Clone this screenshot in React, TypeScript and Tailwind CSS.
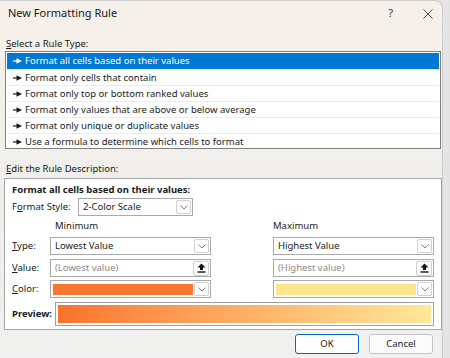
import React from "react";

const F = { fontFamily: '"Noto Sans", "Open Sans", sans-serif' };

function Arrow({ white }: { white?: boolean }) {
  const c = white ? "#ffffff" : "#1a1a1a";
  return (
    <svg width="9" height="6" viewBox="0 0 9 6" className="shrink-0">
      <rect x="0" y="2.4" width="4" height="1.2" fill={c} />
      <polygon points="3.5,0.3 9,3 3.5,5.7" fill={c} />
    </svg>
  );
}

function Chevron() {
  return (
    <div className="w-[15px] h-[14px] border border-[#d0d0d0] rounded-[2px] bg-white flex items-center justify-center shrink-0">
      <svg width="8" height="5" viewBox="0 0 8 5">
        <polyline points="0.5,0.5 4,4 7.5,0.5" fill="none" stroke="#707070" strokeWidth="0.9" />
      </svg>
    </div>
  );
}

function UpBtn() {
  return (
    <div className="w-[16px] h-[15px] border border-[#cfcfcf] rounded-[2px] bg-white flex items-center justify-center shrink-0">
      <svg width="9" height="10" viewBox="0 0 9 10">
        <polygon points="4.5,0.5 8.5,4.5 6,4.5 6,7 3,7 3,4.5 0.5,4.5" fill="#111" />
        <rect x="0.5" y="8.3" width="8" height="1.4" fill="#111" />
      </svg>
    </div>
  );
}

function Combo({ text, w }: { text: string; w: string }) {
  return (
    <div className={`${w} h-[18px] border border-[#a9a9a9] bg-white flex items-center pl-[4px] pr-[1px] justify-between`}>
      <span className="text-[9.5px] text-[#1a1a1a] leading-none">{text}</span>
      <Chevron />
    </div>
  );
}

function ValueBox({ text, w }: { text: string; w: string }) {
  return (
    <div className={`${w} h-[18px] border border-[#a9a9a9] bg-white flex items-center pl-[4px] pr-[1px] justify-between`}>
      <span className="text-[9.5px] text-[#8a8a8a] leading-none">{text}</span>
      <UpBtn />
    </div>
  );
}

function ColorBox({ color, w }: { color: string; w: string }) {
  return (
    <div className={`${w} h-[18px] border border-[#a9a9a9] bg-white flex items-center pl-[2px] pr-[1px] gap-[1px]`}>
      <div className="flex-1 h-[11px]" style={{ background: color }} />
      <Chevron />
    </div>
  );
}

const items = [
  "Format all cells based on their values",
  "Format only cells that contain",
  "Format only top or bottom ranked values",
  "Format only values that are above or below average",
  "Format only unique or duplicate values",
  "Use a formula to determine which cells to format",
];

export default function App() {
  return (
    <div className="w-[450px] h-[358px] bg-[#e4e4e4] overflow-hidden" style={F}>
      <div className="w-[443px] h-[358px] rounded-tr-[8px] border-r border-t border-[#cfcfcf] bg-gradient-to-b from-[#f5f0e9] via-[#f1efec] to-[#f0f0f0] flex flex-col relative">
        <div className="h-[25px] flex items-center pl-[8px] shrink-0">
          <span className="text-[11px] text-[#1a1a1a]">New Formatting Rule</span>
          <span className="ml-auto text-[11px] text-[#333] mr-[30px]">?</span>
          <svg width="10" height="10" viewBox="0 0 10 10" className="mr-[9px]">
            <path d="M0.5 0.5 L9.5 9.5 M9.5 0.5 L0.5 9.5" stroke="#333" strokeWidth="0.9" />
          </svg>
        </div>
        <div className="h-[25px] flex items-end pb-[3px] pl-[6px] shrink-0">
          <span className="text-[9.5px] text-[#1a1a1a] leading-none">
            <span className="underline">S</span>elect a Rule Type:
          </span>
        </div>
        <div className="ml-[5px] w-[436px] h-[98px] border border-[#7f7f7f] bg-white p-[1px] flex flex-col shrink-0">
          {items.map((t, i) => (
            <div
              key={t}
              className={`h-[16px] flex items-center gap-[3px] pl-[6px] shrink-0 ${
                i === 0 ? "bg-[#0078d4] text-white" : "text-[#1a1a1a] border-t border-[#ececec]"
              }`}
            >
              <Arrow white={i === 0} />
              <span className="text-[9.5px] leading-none">{t}</span>
            </div>
          ))}
        </div>
        <div className="h-[29px] flex items-end pb-[5px] pl-[6px] shrink-0">
          <span className="text-[9.5px] text-[#1a1a1a] leading-none">
            <span className="underline">E</span>dit the Rule Description:
          </span>
        </div>
        <div className="ml-[4px] w-[438px] h-[152px] border border-[#a5a5a5] bg-white flex flex-col pl-[7px] shrink-0">
          <div className="h-[15px] flex items-end shrink-0">
            <span className="text-[9.5px] font-bold text-[#1a1a1a] leading-none">
              Format all cells based on their values:
            </span>
          </div>
          <div className="mt-[4px] flex items-center h-[18px] shrink-0">
            <span className="w-[66px] text-[9.5px] text-[#1a1a1a] leading-none">
              F<span className="underline">o</span>rmat Style:
            </span>
            <Combo text="2-Color Scale" w="w-[115px]" />
          </div>
          <div className="h-[14px] flex items-end shrink-0">
            <span className="w-[43px]" />
            <span className="w-[218px] text-[9.5px] text-[#1a1a1a] leading-none">Minimum</span>
            <span className="text-[9.5px] text-[#1a1a1a] leading-none">Maximum</span>
          </div>
          <div className="mt-[7px] flex items-center h-[18px] shrink-0">
            <span className="w-[38px] text-[9.5px] text-[#1a1a1a] leading-none">
              <span className="underline">T</span>ype:
            </span>
            <Combo text="Lowest Value" w="w-[161px]" />
            <span className="w-[62px]" />
            <Combo text="Highest Value" w="w-[161px]" />
          </div>
          <div className="mt-[4px] flex items-center h-[18px] shrink-0">
            <span className="w-[38px] text-[9.5px] text-[#1a1a1a] leading-none">
              <span className="underline">V</span>alue:
            </span>
            <ValueBox text="(Lowest value)" w="w-[161px]" />
            <span className="w-[62px]" />
            <ValueBox text="(Highest value)" w="w-[161px]" />
          </div>
          <div className="mt-[3px] flex items-center h-[18px] shrink-0">
            <span className="w-[38px] text-[9.5px] text-[#1a1a1a] leading-none">
              <span className="underline">C</span>olor:
            </span>
            <ColorBox color="#f8762d" w="w-[161px]" />
            <span className="w-[62px]" />
            <ColorBox color="#fde58e" w="w-[161px]" />
          </div>
          <div className="mt-[4px] flex items-center h-[24px] shrink-0">
            <span className="w-[43px] text-[9.5px] font-bold text-[#1a1a1a] leading-none">Preview:</span>
            <div className="w-[379px] h-[24px] border border-[#a0a0a0] p-[2px]">
              <div className="w-full h-full bg-gradient-to-r from-[#f8732b] to-[#fde899]" />
            </div>
          </div>
        </div>
        <div className="mt-[4px] flex pl-[295px] gap-[10px] shrink-0">
          <div className="w-[64px] h-[20px] bg-white border border-[#0067c0] rounded-[3px] flex items-center justify-center text-[9.5px] text-[#1a1a1a]">
            OK
          </div>
          <div className="w-[64px] h-[20px] bg-[#fbfbfb] border border-[#c4c4c4] rounded-[3px] flex items-center justify-center text-[9.5px] text-[#1a1a1a]">
            Cancel
          </div>
        </div>
      </div>
    </div>
  );
}
